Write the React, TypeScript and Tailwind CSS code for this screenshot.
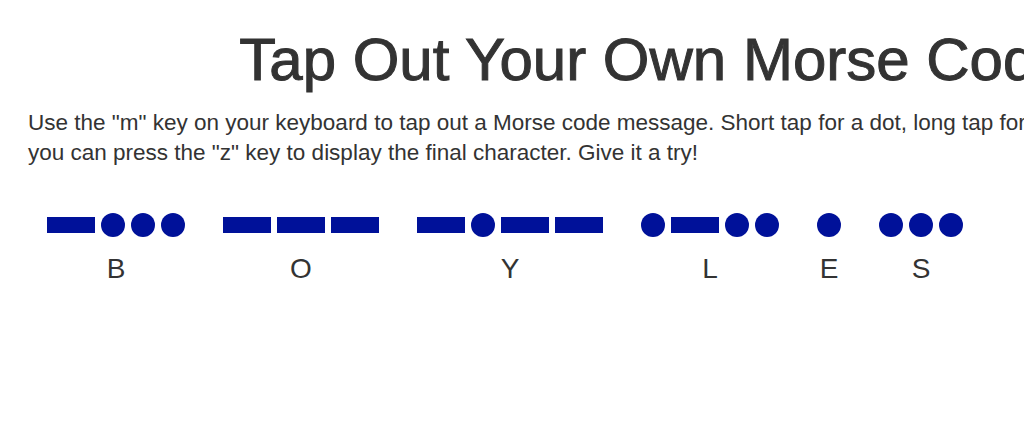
const MORSE: { letter: string; code: string }[] = [
  { letter: "B", code: "-..." },
  { letter: "O", code: "---" },
  { letter: "Y", code: "-.--" },
  { letter: "L", code: ".-.." },
  { letter: "E", code: "." },
  { letter: "S", code: "..." },
];

function Symbol({ kind }: { kind: string }) {
  if (kind === "-") {
    return <div className="mx-[3px] h-4 w-12 bg-[#001199]" />;
  }
  return <div className="mx-[3px] h-6 w-6 rounded-full bg-[#001199]" />;
}

export default function App() {
  return (
    <div className="h-[429px] w-full overflow-hidden bg-white text-[#333333] [font-family:'Liberation_Sans',Arial,sans-serif]">
      <div className="w-[1309px] px-[28px] pt-[27px]">
        <h1 className="whitespace-nowrap text-center text-[60px] leading-[1.1] [-webkit-text-stroke:1px_#333333]">
          Tap Out Your Own Morse Code
        </h1>
        <p className="mt-[15px] whitespace-nowrap text-[22.5px] leading-[30px]">
          Use the "m" key on your keyboard to tap out a Morse code message. Short tap for a dot, long tap for a dash. When you're done with a letter,
          <br />
          you can press the "z" key to display the final character. Give it a try!
        </p>
        <div className="mt-[45px] flex items-start">
          {MORSE.map((m) => (
            <div key={m.letter} className="mx-4 flex flex-col items-center">
              <div className="flex h-6 items-center">
                {m.code.split("").map((c, i) => (
                  <Symbol key={i} kind={c} />
                ))}
              </div>
              <div className="mt-[15px] text-[28px] leading-[1.2]">{m.letter}</div>
            </div>
          ))}
        </div>
      </div>
    </div>
  );
}
